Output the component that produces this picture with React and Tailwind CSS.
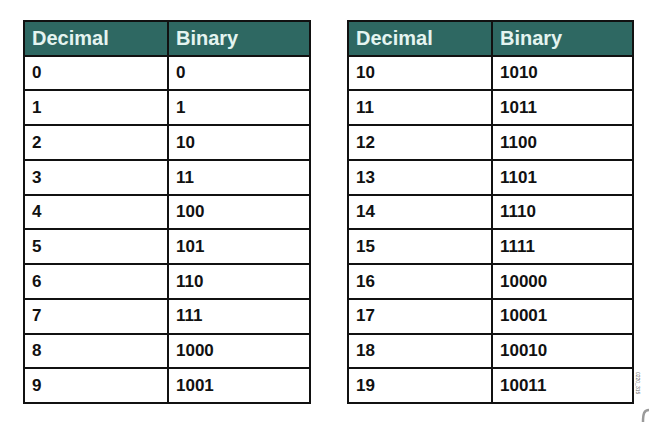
import { Fragment } from "react";

const left = [
  ["0", "0"], ["1", "1"], ["2", "10"], ["3", "11"], ["4", "100"],
  ["5", "101"], ["6", "110"], ["7", "111"], ["8", "1000"], ["9", "1001"],
];
const right = [
  ["10", "1010"], ["11", "1011"], ["12", "1100"], ["13", "1101"], ["14", "1110"],
  ["15", "1111"], ["16", "10000"], ["17", "10001"], ["18", "10010"], ["19", "10011"],
];

function BinaryTable({ rows, width }) {
  return (
    <div
      className={`grid grid-cols-[142px_1fr] grid-rows-[repeat(11,1fr)] gap-[2px] bg-[#111] border-2 border-[#111] h-[384px] ${width}`}
    >
      <div className="bg-[#2e6862] text-[#e4f4f0] text-[20px] font-bold flex items-center pl-[7px]">Decimal</div>
      <div className="bg-[#2e6862] text-[#e4f4f0] text-[20px] font-bold flex items-center pl-[7px]">Binary</div>
      {rows.map(([d, b]) => (
        <Fragment key={d}>
          <div className="bg-white text-[17px] font-bold text-[#111] flex items-center pl-[7px]">{d}</div>
          <div className="bg-white text-[17px] font-bold text-[#111] flex items-center pl-[7px]">{b}</div>
        </Fragment>
      ))}
    </div>
  );
}

export default function App() {
  return (
    <div
      className="relative w-[650px] h-[422px] bg-white overflow-hidden"
      style={{ fontFamily: '"Liberation Sans", Arial, sans-serif' }}
    >
      <div className="flex gap-[36px] pl-[23px] pt-[20px]">
        <BinaryTable rows={left} width="w-[288px]" />
        <BinaryTable rows={right} width="w-[287px]" />
      </div>
      <span className="absolute left-[635px] top-[372px] text-[5px] text-[#666] [writing-mode:vertical-rl] leading-none">
        0220_315
      </span>
      <svg className="absolute left-[640px] top-[408px]" width="10" height="14" viewBox="0 0 10 14">
        <path d="M9 2 C4 2 3 6 3 14" fill="none" stroke="#9a9a9a" strokeWidth="2.5" />
      </svg>
    </div>
  );
}
